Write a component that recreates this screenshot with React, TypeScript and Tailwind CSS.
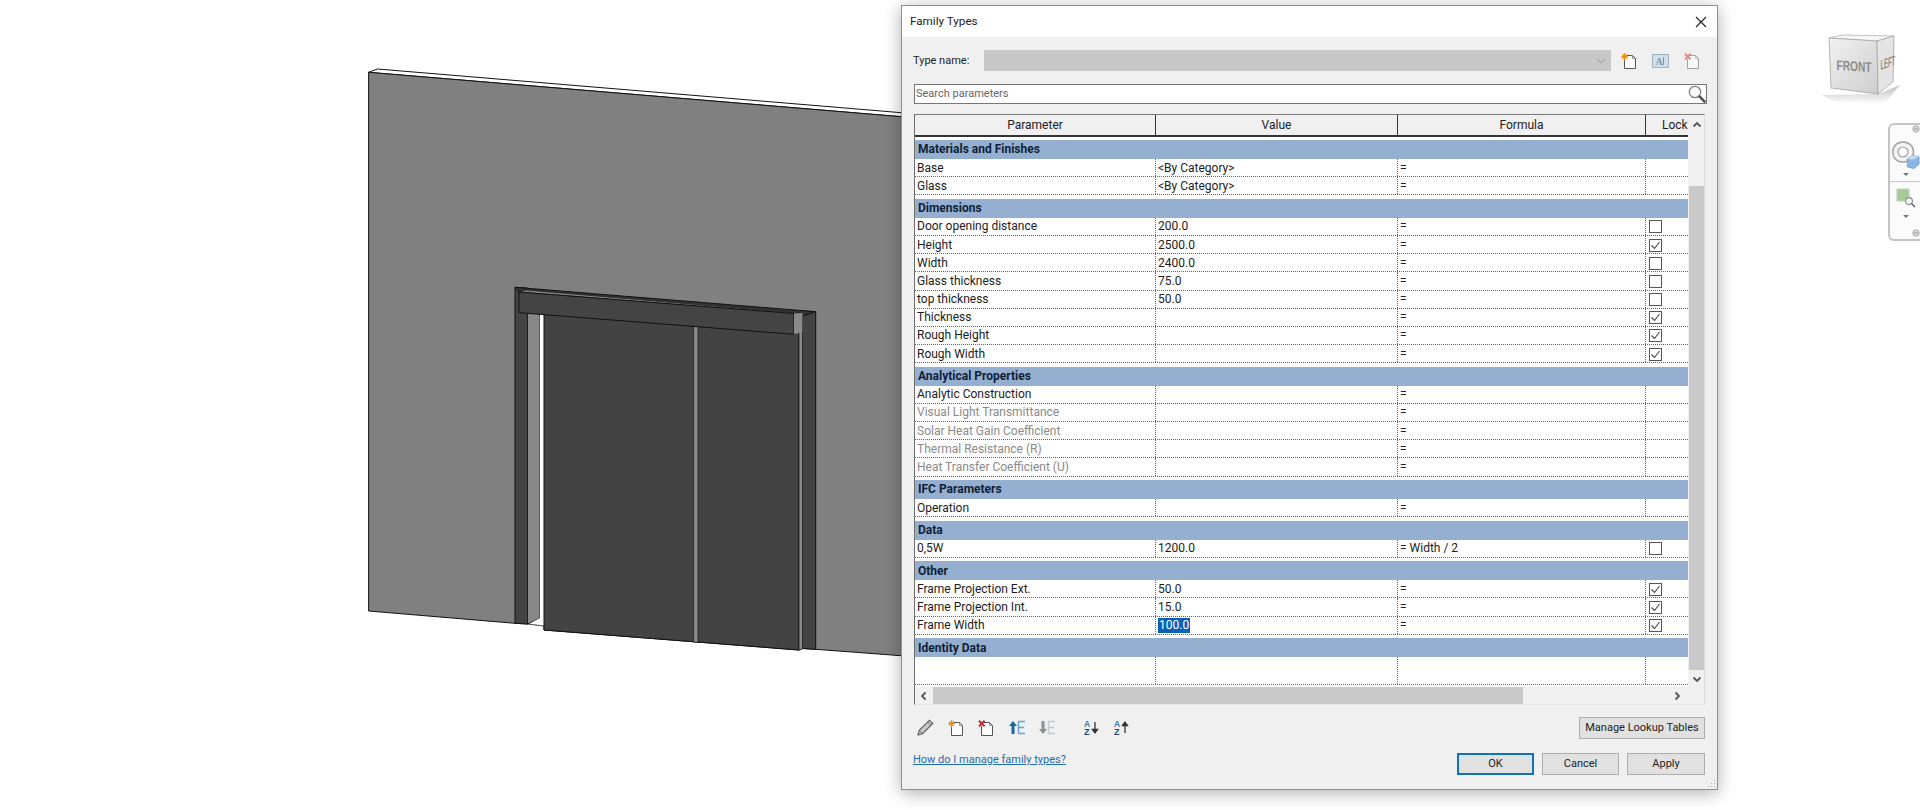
import { ReactNode } from "react";

type Row = { name: string; value?: string; formula?: string; lock?: "on" | "off"; dim?: boolean; selected?: boolean };
type Section = { title: string; rows: Row[] };

const sections: Section[] = [
  {
    title: "Materials and Finishes",
    rows: [
      { name: "Base", value: "<By Category>" },
      { name: "Glass", value: "<By Category>" },
    ],
  },
  {
    title: "Dimensions",
    rows: [
      { name: "Door opening distance", value: "200.0", lock: "off" },
      { name: "Height", value: "2500.0", lock: "on" },
      { name: "Width", value: "2400.0", lock: "off" },
      { name: "Glass thickness", value: "75.0", lock: "off" },
      { name: "top thickness", value: "50.0", lock: "off" },
      { name: "Thickness", lock: "on" },
      { name: "Rough Height", lock: "on" },
      { name: "Rough Width", lock: "on" },
    ],
  },
  {
    title: "Analytical Properties",
    rows: [
      { name: "Analytic Construction" },
      { name: "Visual Light Transmittance", dim: true },
      { name: "Solar Heat Gain Coefficient", dim: true },
      { name: "Thermal Resistance (R)", dim: true },
      { name: "Heat Transfer Coefficient (U)", dim: true },
    ],
  },
  { title: "IFC Parameters", rows: [{ name: "Operation" }] },
  { title: "Data", rows: [{ name: "0,5W", value: "1200.0", formula: "= Width / 2", lock: "off" }] },
  {
    title: "Other",
    rows: [
      { name: "Frame Projection Ext.", value: "50.0", lock: "on" },
      { name: "Frame Projection Int.", value: "15.0", lock: "on" },
      { name: "Frame Width", value: "100.0", lock: "on", selected: true },
    ],
  },
  { title: "Identity Data", rows: [] },
];

function Model() {
  return (
    <svg className="absolute left-0 top-0" width="1920" height="810" viewBox="0 0 1920 810">
      <polygon points="368.6,72.3 377.5,69 905,113 905,117" fill="#ffffff" stroke="#111" strokeWidth="1" />
      <polygon points="368.6,72.3 905,117 905,656 815.7,649.3 802.5,648.5 799,650 544,630 544,626 529,624 515,623.3 368.6,611" fill="#808080" stroke="#111" strokeWidth="1" />
      {/* frame */}
      <polygon points="515,287.3 527.5,288 527.5,624 515,623.3" fill="#444" stroke="#111" strokeWidth="1" />
      <polygon points="527.5,300 540,310 540,618 527.5,624" fill="#888" stroke="#111" strokeWidth="0.8" />
      <polygon points="540,300 544,305 544,626 529,624 540,618" fill="#fff" />
      <line x1="529" y1="624" x2="544" y2="626" stroke="#555" strokeWidth="0.8" />
      <polygon points="802.5,311 815.7,311.7 815.7,649.3 802.5,648.5" fill="#444" stroke="#111" strokeWidth="1" />
      {/* door leaves */}
      <polygon points="544,305 799,330 799,650 544,630" fill="#434343" stroke="#111" strokeWidth="1" />
      <polygon points="693.6,320 698,320 698,642.5 693.6,642" fill="#888" stroke="#222" strokeWidth="0.8" />
      <polygon points="799,330 802.5,330 802.5,649 799,650" fill="#888" stroke="#222" strokeWidth="0.8" />
      {/* head */}
      <polygon points="515,287.3 815.7,311.7 802.5,316 519,292" fill="#333" stroke="#111" strokeWidth="1" />
      <polygon points="526,290 802,313.5 794,314 519,292" fill="#888" stroke="#222" strokeWidth="0.8" />
      <polygon points="519,292 794,313.5 794,334.3 519,312.7" fill="#444" stroke="#111" strokeWidth="1" />
      <polygon points="794,313.5 802.5,313 802.5,332 794,334.3" fill="#8a8a8a" />
    </svg>
  );
}

function ViewCube() {
  return (
    <svg className="absolute left-[1810px] top-[25px]" width="105" height="90" viewBox="1810 25 105 90">
      <defs>
        <linearGradient id="front" x1="0" y1="0" x2="1" y2="1">
          <stop offset="0" stopColor="#f2f2f2" />
          <stop offset="1" stopColor="#cdcdcd" />
        </linearGradient>
        <linearGradient id="shadow" x1="0" y1="0" x2="0" y2="1">
          <stop offset="0" stopColor="#9a9a9a" />
          <stop offset="1" stopColor="#ffffff" />
        </linearGradient>
      </defs>
      <polygon points="1822,95 1878,94 1900,85 1884,104 1835,102" fill="url(#shadow)" opacity="0.65" />
      <polygon points="1829,38 1843,35 1894,36 1877,41" fill="#f7f7f7" stroke="#b5b5b5" strokeWidth="0.8" />
      <polygon points="1829,38 1877,41 1878,94 1831,88" fill="url(#front)" stroke="#a5a5a5" strokeWidth="0.8" />
      <polygon points="1877,41 1894,36 1893,82 1878,94" fill="#e4e4e4" stroke="#a5a5a5" strokeWidth="0.8" />
      <text x="0" y="0" transform="matrix(1 0.06 0 1 1836.5 70)" fontFamily="'Liberation Sans', sans-serif" fontSize="14" fontWeight="700" fill="#8b8b8b" textLength="35" lengthAdjust="spacingAndGlyphs">FRONT</text>
      <text x="0" y="0" transform="matrix(0.42 -0.14 0 1 1880.5 70)" fontFamily="'Liberation Sans', sans-serif" fontSize="14" fontWeight="700" fill="#8b8b8b">LEFT</text>
    </svg>
  );
}

function SmallDot() {
  return (
    <svg width="8" height="8" viewBox="0 0 8 8">
      <circle cx="4" cy="4" r="3.2" fill="#dcdcdc" stroke="#aaa" />
      <line x1="2" y1="4" x2="6" y2="4" stroke="#999" />
    </svg>
  );
}

function NavBar() {
  return (
    <div className="absolute left-[1888px] top-[123px] w-[50px] h-[118px] bg-[#fbfbfb] border-2 border-[#c4c4c4] rounded-md flex flex-col">
      <div className="pl-[22px] h-[16px]"><SmallDot /></div>
      <svg className="ml-[2px]" width="30" height="30" viewBox="0 0 30 30">
        <path d="M11 1c6 0 10.500 4 10.500 10S17 21 11 21 .8 17 .8 11 5 1 11 1z" fill="#f4f4f4" stroke="#a0a0a0" strokeWidth="1.4" />
        <circle cx="11" cy="11" r="5" fill="#fff" stroke="#a0a0a0" strokeWidth="1.2" />
        <polygon points="15,18 20,14.500 27,15.500 27,23 22,27.500 15.500,26" fill="#8db6e2" stroke="#6d9aca" strokeWidth="0.8" />
        <polygon points="15,18 20,14.500 27,15.500 22,18.500" fill="#c3daf2" />
      </svg>
      <svg className="ml-[12px] mt-[1px]" width="8" height="6" viewBox="0 0 8 6"><polygon points="1,1 7,1 4,4" fill="#777" /></svg>
      <div className="h-[1px] bg-[#c8c8c8] mt-[3px] mb-[6px]" />
      <svg className="ml-[6px]" width="22" height="22" viewBox="0 0 22 22">
        <rect x="1" y="1" width="12" height="12" fill="#a9c99b" stroke="#bcd4b2" />
        <circle cx="13" cy="13" r="3.4" fill="#f4f8ff" stroke="#888" strokeWidth="1.1" />
        <line x1="15.500" y1="15.500" x2="19" y2="19" stroke="#666" strokeWidth="1.6" />
      </svg>
      <svg className="ml-[12px] mt-[4px]" width="8" height="6" viewBox="0 0 8 6"><polygon points="1,1 7,1 4,4" fill="#777" /></svg>
      <div className="pl-[22px] pt-[9px]"><SmallDot /></div>
    </div>
  );
}

function PageIcon({ mark, faded }: { mark: "new" | "del"; faded?: boolean }) {
  return (
    <svg width="16" height="16" viewBox="0 0 16 16" className={faded ? "opacity-50" : ""}>
      <path d="M3.500 6v9.500h11V5.500l-3-3H6" fill="#fff" stroke="#555" strokeWidth="1" />
      <path d="M11.500 2.500v3h3" fill="none" stroke="#777" strokeWidth="0.8" />
      {mark === "new" ? (
        <g>
          <circle cx="3.600" cy="3.600" r="2.400" fill="#f0a62c" />
          <path d="M3.600 0v7.200M0 3.600h7.200M1 1l5.200 5.200M6.200 1L1 6.200" stroke="#e2901f" strokeWidth="1" />
        </g>
      ) : (
        <path d="M1 0.800l5.600 5.600M6.600 0.800L1 6.400" stroke="#c4262e" strokeWidth="2" />
      )}
    </svg>
  );
}

function RenameIcon() {
  return (
    <svg width="17" height="14" viewBox="0 0 17 14">
      <rect x="0.500" y="0.500" width="16" height="13" fill="#cfe0ea" stroke="#a3b2bd" />
      <text x="3.500" y="11" fontFamily="'Liberation Serif', serif" fontSize="10" fontWeight="700" fill="#7d94a8">A</text>
      <line x1="11.500" y1="3" x2="11.500" y2="11" stroke="#7d94a8" />
    </svg>
  );
}

function SearchIcon() {
  return (
    <svg width="18" height="18" viewBox="0 0 18 18">
      <circle cx="7" cy="7" r="5.700" fill="#f5f8fb" stroke="#808080" strokeWidth="1.2" />
      <line x1="11.500" y1="11.500" x2="16.500" y2="16.500" stroke="#555" strokeWidth="2.600" strokeLinecap="round" />
    </svg>
  );
}

function Pencil() {
  return (
    <svg width="17" height="17" viewBox="0 0 17 17">
      <path d="M1 16l1.300-4.600L12.400 1.200l3.400 3.300L5.600 14.700z" fill="#c9c9c9" stroke="#5c5c5c" strokeWidth="1.1" />
      <path d="M2.300 11.400l3.300 3.300M10.700 3l3.300 3.300" stroke="#666" strokeWidth="0.9" />
    </svg>
  );
}

function MoveIcon({ dir }: { dir: "up" | "down" }) {
  const up = dir === "up";
  return (
    <svg width="17" height="15" viewBox="0 0 17 15">
      <path d="M9.500 1.500h6.500M9.500 1.500v12M9.500 7.500h5.500M9.500 13.500h6.500" fill="none" stroke={up ? "#6aa0cc" : "#c3c8cc"} strokeWidth="1.4" />
      {up ? (
        <path d="M4 1L8 6H5.500v8h-3V6H0z" fill="#14699f" />
      ) : (
        <path d="M4 14L8 9H5.500V1h-3v8H0z" fill="#8f8f8f" />
      )}
    </svg>
  );
}

function SortIcon({ dir }: { dir: "up" | "down" }) {
  const down = dir === "down";
  return (
    <svg width="15" height="17" viewBox="0 0 15 17">
      <text x="0" y="7.500" fontFamily="'Liberation Sans', sans-serif" fontSize="8.500" fontWeight="700" fill="#3e78a4">A</text>
      <text x="0" y="16" fontFamily="'Liberation Sans', sans-serif" fontSize="9" fontWeight="700" fill="#234a6b">Z</text>
      {down ? (
        <path d="M11 3v10M8.500 10.500L11 14l2.500-3.500z" stroke="#333" strokeWidth="1.3" fill="#333" />
      ) : (
        <path d="M11 14V4M8.500 6.500L11 3l2.500 3.500z" stroke="#333" strokeWidth="1.3" fill="#333" />
      )}
    </svg>
  );
}

function Chevron({ dir }: { dir: "up" | "down" | "left" | "right" }) {
  const d = {
    up: "M1.500 6.500L5 3l3.500 3.500",
    down: "M1.500 3.500L5 7l3.500-3.500",
    left: "M6.500 1.500L3 5l3.500 3.500",
    right: "M3.500 1.500L7 5 3.500 8.500",
  }[dir];
  return (
    <svg width="10" height="10" viewBox="0 0 10 10">
      <path d={d} fill="none" stroke="#555" strokeWidth="1.8" />
    </svg>
  );
}

function CheckBox({ checked }: { checked: boolean }) {
  return (
    <div className="w-[13px] h-[13px] bg-white border border-[#555] flex items-center justify-center shrink-0">
      {checked && (
        <svg width="11" height="11" viewBox="0 0 11 11">
          <path d="M1.500 5.500l3 3L9.500 2" fill="none" stroke="#444" strokeWidth="1.1" />
        </svg>
      )}
    </div>
  );
}

function Cell({ width, children, first }: { width: string; children?: ReactNode; first?: boolean }) {
  return (
    <div className={`${width} h-full flex items-center shrink-0 overflow-hidden whitespace-nowrap ${first ? "pl-[2px]" : "pl-[2px] border-l border-dotted border-[#666]"}`}>
      {children}
    </div>
  );
}

function ParamRow({ row }: { row: Row }) {
  return (
    <div className={`flex h-[18.2px] border-b border-dotted border-[#666] ${row.dim ? "text-[#8a8a8a]" : "text-[#1c1c1c]"}`}>
      <Cell width="w-[240px]" first>{row.name}</Cell>
      <Cell width="w-[242px]">
        {row.selected ? (
          <span className="bg-[#0a62b4] text-white px-[1px] leading-[15px]">{row.value}</span>
        ) : (
          <span className="text-[#1c1c1c]">{row.value}</span>
        )}
      </Cell>
      <Cell width="w-[248px]">
        <span className="text-[#1c1c1c]">{row.formula ?? "="}</span>
      </Cell>
      <Cell width="w-[43px]">
        {row.lock && (
          <div className="pl-[1px] pt-[1px]">
            <CheckBox checked={row.lock === "on"} />
          </div>
        )}
      </Cell>
    </div>
  );
}

function ParamTable() {
  return (
    <div className="mt-[10px] ml-[12px] w-[791px] h-[591px] border-l border-t border-l-[#6e6e6e] border-t-[#7a7a7a] border-r border-r-[#dedede] border-b border-b-[#e4e4e4] flex flex-col text-[12px]">
      <div className="flex flex-1 min-h-0">
        <div className="w-[773px] flex flex-col bg-white">
          <div className="flex h-[21.6px] bg-[#f0f0f0] border-b-2 border-[#333] shrink-0 text-[#222]">
            <div className="w-[240px] flex items-center justify-center">Parameter</div>
            <div className="w-[242px] flex items-center justify-center border-l border-[#333]">Value</div>
            <div className="w-[248px] flex items-center justify-center border-l border-[#333]">Formula</div>
            <div className="w-[43px] flex items-center pl-[16px] border-l border-[#333] overflow-hidden">Lock</div>
          </div>
          <div className="flex-1 overflow-hidden">
            {sections.map((section) => (
              <div key={section.title}>
                <div className="mt-[3.4px] h-[19px] bg-[#94afcf] flex items-center pl-[3px] font-bold text-[#0f1f38]">
                  {section.title}
                </div>
                {section.rows.map((row) => (
                  <ParamRow key={row.name} row={row} />
                ))}
              </div>
            ))}
            <div className="flex h-[28.4px] border-b border-dotted border-[#666]">
              <Cell width="w-[240px]" first />
              <Cell width="w-[242px]" />
              <Cell width="w-[248px]" />
              <Cell width="w-[43px]" />
            </div>
          </div>
        </div>
        <div className="w-[16px] flex flex-col bg-[#f0f0f0] ml-[1px]">
          <div className="h-[71px] flex justify-center pt-[5px]"><Chevron dir="up" /></div>
          <div className="h-[484px] bg-[#c9c9c9]" />
          <div className="flex-1 flex justify-center pt-[4px]"><Chevron dir="down" /></div>
        </div>
      </div>
      <div className="h-[17px] flex items-center bg-[#f0f0f0] shrink-0">
        <div className="w-[18px] flex justify-center"><Chevron dir="left" /></div>
        <div className="w-[590px] h-full bg-[#c9c9c9]" />
        <div className="flex-1 flex justify-end pr-[22px]"><Chevron dir="right" /></div>
      </div>
    </div>
  );
}

function Button({ label, primary, width }: { label: string; primary?: boolean; width: string }) {
  return (
    <div className={`${width} h-[22px] flex items-center justify-center whitespace-nowrap text-[11px] text-[#222] bg-[#e1e1e1] ${primary ? "border-2 border-[#1272b8]" : "border border-[#adadad]"}`}>
      {label}
    </div>
  );
}

function Dialog() {
  return (
    <div className="absolute left-[901px] top-[5px] w-[817px] h-[785px] bg-[#f0f0f0] border border-[#8f8f8f] shadow-[0_3px_16px_rgba(0,0,0,0.32)] flex flex-col text-[12px] text-[#222] font-['Roboto','Noto_Sans',sans-serif]">
      <div className="h-[31px] bg-white flex items-center justify-between pl-[8px] pr-[10px] shrink-0">
        <span className="text-[11.7px]">Family Types</span>
        <svg width="12" height="12" viewBox="0 0 12 12">
          <path d="M1 1l10 10M11 1L1 11" stroke="#222" strokeWidth="1.1" />
        </svg>
      </div>

      <div className="mt-[13px] ml-[11px] h-[21px] flex items-center">
        <span className="w-[71px] text-[11px] pt-[2px]">Type name:</span>
        <div className="w-[627px] h-full bg-[#c8c8c8] flex items-center justify-end pr-[5px]">
          <svg width="10" height="8" viewBox="0 0 10 8">
            <path d="M1 2l4 4 4-4" fill="none" stroke="#a9a9a9" strokeWidth="1.2" />
          </svg>
        </div>
        <div className="ml-[10px] flex items-center gap-[15px]">
          <PageIcon mark="new" />
          <RenameIcon />
          <PageIcon mark="del" faded />
        </div>
      </div>

      <div className="mt-[13px] ml-[12px] w-[793px] h-[20px] bg-white border border-[#777] flex items-center justify-between pl-[1px]">
        <span className="text-[#666] text-[11px]">Search parameters</span>
        <SearchIcon />
      </div>

      <ParamTable />

      <div className="mt-[12px] ml-[15px] mr-[12px] h-[22px] flex items-center">
        <div className="pb-[1px] flex items-center">
          <Pencil />
          <div className="ml-[14px]"><PageIcon mark="new" /></div>
          <div className="ml-[14px]"><PageIcon mark="del" /></div>
          <div className="ml-[15px]"><MoveIcon dir="up" /></div>
          <div className="ml-[13px]"><MoveIcon dir="down" /></div>
          <div className="ml-[28px]"><SortIcon dir="down" /></div>
          <div className="ml-[15px]"><SortIcon dir="up" /></div>
        </div>
        <div className="ml-auto"><Button label="Manage Lookup Tables" width="w-[126px]" /></div>
      </div>

      <div className="mt-[14px] ml-[11px] mr-[12px] flex items-start justify-between">
        <a className="text-[#1f6db0] text-[11px] underline leading-[14px]">How do I manage family types?</a>
        <div className="flex gap-[8px]">
          <Button label="OK" width="w-[77px]" primary />
          <Button label="Cancel" width="w-[77px]" />
          <Button label="Apply" width="w-[78px]" />
        </div>
      </div>

      <svg className="absolute right-[1px] bottom-[1px]" width="10" height="10" viewBox="0 0 10 10">
        <path d="M8 2h1v1H8zM5 5h1v1H5zM8 5h1v1H8zM2 8h1v1H2zM5 8h1v1H5zM8 8h1v1H8z" fill="#a8a8a8" />
      </svg>
    </div>
  );
}

export default function App() {
  return (
    <div className="relative w-[1920px] h-[810px] bg-white overflow-hidden">
      <Model />
      <ViewCube />
      <NavBar />
      <Dialog />
    </div>
  );
}
